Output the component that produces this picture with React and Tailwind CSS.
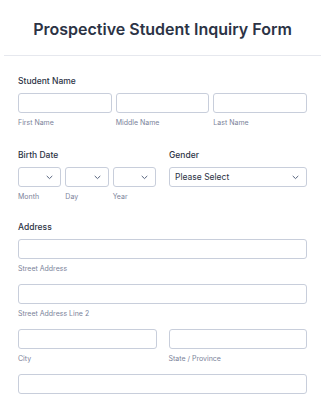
import React from 'react';

function Chevron() {
  return (
    <svg width="7" height="5" viewBox="0 0 7 5" className="shrink-0">
      <path d="M1 1.2 L3.5 3.6 L6 1.2" fill="none" stroke="#57647e" strokeWidth="1" strokeLinecap="round" strokeLinejoin="round" />
    </svg>
  );
}

function Field({ className = '' }) {
  return <div className={`h-[20px] rounded-[3px] border border-[#c8cedb] bg-white ${className}`} />;
}

function Select({ text }) {
  return (
    <div className="flex h-[20px] items-center justify-between rounded-[3px] border border-[#c8cedb] bg-white pl-[5px] pr-[7px]">
      <span className="text-[8.5px] text-[#2c3345]">{text}</span>
      <Chevron />
    </div>
  );
}

function Sub({ children }) {
  return <div className="mt-[5px] text-[7px] leading-[9px] text-[#7b839a]">{children}</div>;
}

function Label({ children }) {
  return <div className="text-[8.5px] leading-[12px] font-medium text-[#2c3345]">{children}</div>;
}

export default function App() {
  return (
    <div className="min-h-[400px] w-full overflow-hidden bg-white font-['Inter','Liberation_Sans',sans-serif]">
      <div className="mx-[4px] border-b border-[#e6e8ee] pt-[17px] pb-[14px] text-center">
        <h1 className="text-[16px] leading-[24px] font-semibold text-[#2c3345]">
          Prospective Student Inquiry Form
        </h1>
      </div>

      <div className="px-[18px] pt-[19px]">
        <Label>Student Name</Label>
        <div className="mt-[6px] grid grid-cols-3 gap-[4px]">
          <div>
            <Field />
            <Sub>First Name</Sub>
          </div>
          <div>
            <Field />
            <Sub>Middle Name</Sub>
          </div>
          <div>
            <Field />
            <Sub>Last Name</Sub>
          </div>
        </div>

        <div className="mt-[22px] grid grid-cols-2 gap-[13px]">
          <div>
            <Label>Birth Date</Label>
            <div className="mt-[6px] grid grid-cols-3 gap-[4px]">
              <div>
                <Select text="" />
                <Sub>Month</Sub>
              </div>
              <div>
                <Select text="" />
                <Sub>Day</Sub>
              </div>
              <div>
                <Select text="" />
                <Sub>Year</Sub>
              </div>
            </div>
          </div>
          <div>
            <Label>Gender</Label>
            <div className="mt-[6px]">
              <Select text="Please Select" />
            </div>
          </div>
        </div>

        <div className="mt-[20px]">
          <Label>Address</Label>
          <div className="mt-[6px]">
            <Field />
            <Sub>Street Address</Sub>
          </div>
          <div className="mt-[11px]">
            <Field />
            <Sub>Street Address Line 2</Sub>
          </div>
          <div className="mt-[11px] grid grid-cols-2 gap-[12px]">
            <div>
              <Field />
              <Sub>City</Sub>
            </div>
            <div>
              <Field />
              <Sub>State / Province</Sub>
            </div>
          </div>
          <div className="mt-[11px]">
            <Field />
          </div>
        </div>
      </div>
    </div>
  );
}
